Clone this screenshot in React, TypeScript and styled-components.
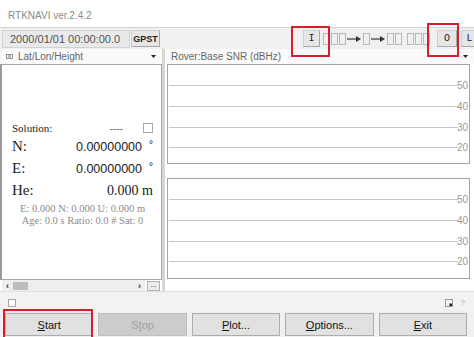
import React from 'react';
import styled, { createGlobalStyle } from 'styled-components';

const GlobalStyle = createGlobalStyle`
  html, body {
    margin: 0;
    padding: 0;
    background: #fff;
  }
  body {
    font-family: "Liberation Sans", Arial, sans-serif;
  }
`;

const Window = styled.div`
  position: relative;
  width: 474px;
  height: 337px;
  overflow: hidden;
  background: #fff;
  display: flex;
  flex-direction: column;
`;

const TitleBar = styled.div`
  height: 27px;
  box-sizing: border-box;
  padding: 3px 0 0 8px;
  display: flex;
  align-items: center;
  font-size: 10px;
  color: #8a8a8a;
`;

const Toolbar = styled.div`
  height: 22px;
  box-sizing: border-box;
  display: flex;
  align-items: center;
  background: #f0f0f0;
  border-top: 1px solid #d4d4d4;
  padding-left: 2px;
`;

const TimeBox = styled.div`
  width: 128px;
  height: 18px;
  box-sizing: border-box;
  display: flex;
  align-items: center;
  padding-left: 7px;
  background: #e9e9e9;
  border: 1px solid #d2d2d2;
  font-size: 11px;
  color: #555;
`;

const SmallButton = styled.div<{ $w: number; $mono?: boolean }>`
  width: ${p => p.$w}px;
  height: 17px;
  box-sizing: border-box;
  display: flex;
  align-items: center;
  justify-content: center;
  margin-left: 1px;
  background: #e6e6e6;
  border: 1px solid #d0d0d0;
  border-right-color: #a8a8a8;
  border-bottom-color: #a8a8a8;
  font-family: ${p => (p.$mono ? '"Liberation Mono", "Courier New", monospace' : '"Liberation Sans", Arial, sans-serif')};
  font-size: ${p => (p.$mono ? 10 : 9)}px;
  font-weight: ${p => (p.$mono ? 'normal' : 'bold')};
  color: #222;
  flex-shrink: 0;
`;

const StreamGroup = styled.div`
  margin-left: auto;
  display: flex;
  align-items: center;
  gap: 3px;
  margin-right: -4px;
`;

const Stream = styled.div`
  width: 110px;
  display: flex;
  align-items: center;
`;

const Tofu = styled.span<{ $gap?: number }>`
  display: inline-block;
  width: 5px;
  height: 10px;
  border: 1px solid #b8b8b8;
  margin-right: 1px;
  margin-left: ${p => p.$gap ?? 0}px;
`;

const Arrow = () => (
  <svg width="15" height="6" viewBox="0 0 15 6">
    <line x1="0" y1="3" x2="10" y2="3" stroke="#333" strokeWidth="1.2" />
    <polygon points="9,0 14,3 9,6" fill="#333" />
  </svg>
);

const Main = styled.div`
  flex: 1;
  display: flex;
  min-height: 0;
`;

const LeftCol = styled.div`
  width: 162px;
  display: flex;
  flex-direction: column;
`;

const Splitter = styled.div`
  width: 3px;
  background: #d6d6d6;
`;

const RightCol = styled.div`
  flex: 1;
  display: flex;
  flex-direction: column;
`;

const PaneHeader = styled.div`
  height: 15px;
  flex-shrink: 0;
  display: flex;
  align-items: center;
  gap: 5px;
  padding: 0 6px 0 6px;
  font-size: 10px;
  color: #666;
  background: #fafafa;
`;

const HeaderIcons = styled.div`
  margin-left: auto;
  display: flex;
  align-items: center;
  gap: 9px;
`;

const DropArrow = () => (
  <svg width="5" height="3" viewBox="0 0 5 3">
    <polygon points="0,0 5,0 2.5,3" fill="#222" />
  </svg>
);

const Dash = () => (
  <svg width="6" height="3" viewBox="0 0 6 3">
    <rect x="0" y="0" width="6" height="2" fill="#444" />
  </svg>
);

const GridIcon = () => (
  <svg width="7" height="5" viewBox="0 0 7 5">
    <rect x="0.5" y="0.5" width="2.5" height="4" fill="none" stroke="#777" strokeWidth="0.8" />
    <rect x="4" y="0.5" width="2.5" height="4" fill="none" stroke="#777" strokeWidth="0.8" />
  </svg>
);

const SolPanel = styled.div`
  flex: 1;
  box-sizing: border-box;
  background: #fff;
  border: 1px solid #a8a8a8;
  border-left: 2px solid #999;
  padding: 55px 8px 0 10px;
  display: flex;
  flex-direction: column;
`;

const Row = styled.div<{ $h: number }>`
  height: ${p => p.$h}px;
  display: flex;
  align-items: center;
  justify-content: space-between;
`;

const SerifLabel = styled.span<{ $size: number }>`
  font-family: "Liberation Serif", "Times New Roman", serif;
  font-size: ${p => p.$size}px;
  color: #222;
`;

const Value = styled.span<{ $serif?: boolean }>`
  font-family: ${p => (p.$serif ? '"Liberation Serif", "Times New Roman", serif' : '"Liberation Sans", Arial, sans-serif')};
  font-size: ${p => (p.$serif ? 14 : 12.5)}px;
  color: #222;
`;

const Degree = styled.span`
  font-size: 10px;
  margin-left: 7px;
  vertical-align: 3px;
`;

const SolState = styled.div`
  display: flex;
  align-items: center;
  gap: 20px;
  font-size: 10px;
  color: #666;
`;

const CheckBox = styled.span<{ $size: number }>`
  display: inline-block;
  width: ${p => p.$size}px;
  height: ${p => p.$size}px;
  box-sizing: border-box;
  border: 1px solid #a6a6a6;
  background: #fff;
`;

const InfoLine = styled.div`
  height: 12px;
  display: flex;
  align-items: center;
  justify-content: center;
  font-family: "Liberation Serif", "Times New Roman", serif;
  font-size: 10.5px;
  color: #8c8c8c;
  white-space: nowrap;
`;

const ScrollRow = styled.div`
  height: 11px;
  flex-shrink: 0;
  display: flex;
  align-items: center;
  background: #fff;
`;

const ScrollTrack = styled.div`
  width: 143px;
  height: 11px;
  margin-left: 2px;
  box-sizing: border-box;
  display: flex;
  align-items: center;
  padding: 0 4px;
  background: #eeeeee;
  font-size: 9px;
  font-weight: bold;
  color: #333;
`;

const Thumb = styled.div`
  width: 15px;
  height: 8px;
  margin-left: 4px;
  background: #bdbdbd;
`;

const MoreButton = styled.div`
  width: 13px;
  height: 10px;
  margin-left: 2px;
  box-sizing: border-box;
  border: 1px solid #b0b0b0;
  background: #ececec;
  font-size: 7px;
  line-height: 6px;
  text-align: center;
  color: #333;
`;

const ChartArea = styled.div`
  flex: 1;
  display: flex;
  flex-direction: column;
  gap: 14px;
  padding: 0 4px 12px 2px;
`;

const ChartBox = styled.div<{ $h: number }>`
  height: ${p => p.$h}px;
  box-sizing: border-box;
  border: 1px solid #a4a4a4;
  background: #fff;
`;

const StatusBar = styled.div`
  height: 20px;
  box-sizing: border-box;
  display: flex;
  align-items: center;
  padding: 2px 9px 0 8px;
  background: #f2f2f2;
  border-top: 1px solid #dedede;
`;

const StatusIcons = styled.div`
  margin-left: auto;
  display: flex;
  align-items: center;
  gap: 8px;
  font-size: 8px;
  color: #aaa;
`;

const ButtonRow = styled.div`
  height: 26px;
  box-sizing: border-box;
  padding: 2px 7px 0 5px;
  display: grid;
  grid-template-columns: repeat(5, 1fr);
  gap: 5px;
  background: #f0f0f0;
`;

const Button = styled.div<{ $disabled?: boolean }>`
  height: 23px;
  box-sizing: border-box;
  display: flex;
  align-items: center;
  justify-content: center;
  font-size: 11px;
  background: ${p => (p.$disabled ? '#cccccc' : '#e1e1e1')};
  border: 1px solid ${p => (p.$disabled ? '#bfbfbf' : '#adadad')};
  color: ${p => (p.$disabled ? '#a0a0a0' : '#111')};
  u {
    text-decoration-thickness: 1px;
    text-underline-offset: 1px;
  }
`;

const Mark = styled.div<{ $x: number; $y: number; $w: number; $h: number }>`
  position: absolute;
  left: ${p => p.$x}px;
  top: ${p => p.$y}px;
  width: ${p => p.$w}px;
  height: ${p => p.$h}px;
  box-sizing: border-box;
  border: 2px solid #d4202c;
  pointer-events: none;
`;

const SnrChart = ({ h }: { h: number }) => {
  const w = 301;
  const rows = [
    { y: 20, label: '50' },
    { y: 41, label: '40' },
    { y: 62, label: '30' },
    { y: 82, label: '20' },
  ];
  return (
    <ChartBox $h={h}>
      <svg width={w} height={h - 2} viewBox={`0 0 ${w} ${h - 2}`} style={{ display: 'block' }}>
        {rows.map(r => (
          <g key={r.label}>
            <line x1="1" y1={r.y + 0.5} x2="290" y2={r.y + 0.5} stroke="#c6c6c6" strokeWidth="1" />
            <text
              x="289"
              y={r.y + 4}
              fontSize="10"
              fill="#9a9a9a"
              fontFamily='"Liberation Sans", Arial, sans-serif'
            >
              {r.label}
            </text>
          </g>
        ))}
      </svg>
    </ChartBox>
  );
};

export default function App() {
  return (
    <>
      <GlobalStyle />
      <Window>
        <TitleBar>RTKNAVI ver.2.4.2</TitleBar>

        <Toolbar>
          <TimeBox>2000/01/01 00:00:00.0</TimeBox>
          <SmallButton $w={29}>GPST</SmallButton>
          <StreamGroup>
            <SmallButton $w={17} $mono>I</SmallButton>
            <Stream>
              <Tofu /><Tofu /><Tofu />
              <Arrow />
              <Tofu $gap={1} />
              <Arrow />
              <Tofu $gap={1} /><Tofu />
              <Tofu $gap={4} /><Tofu /><Tofu />
            </Stream>
            <SmallButton $w={20} $mono>O</SmallButton>
            <SmallButton $w={17} $mono>L</SmallButton>
          </StreamGroup>
        </Toolbar>

        <Main>
          <LeftCol>
            <PaneHeader>
              <GridIcon />
              Lat/Lon/Height
              <HeaderIcons>
                <DropArrow />
              </HeaderIcons>
            </PaneHeader>
            <SolPanel>
              <Row $h={16}>
                <SerifLabel $size={11}>Solution:</SerifLabel>
                <SolState>
                  ----
                  <CheckBox $size={10} />
                </SolState>
              </Row>
              <Row $h={21}>
                <SerifLabel $size={15}>N:</SerifLabel>
                <Value>0.00000000<Degree>°</Degree></Value>
              </Row>
              <Row $h={22}>
                <SerifLabel $size={15}>E:</SerifLabel>
                <Value>0.00000000<Degree>°</Degree></Value>
              </Row>
              <Row $h={23}>
                <SerifLabel $size={15}>He:</SerifLabel>
                <Value $serif>0.000 m</Value>
              </Row>
              <InfoLine>E: 0.000 N: 0.000 U: 0.000 m</InfoLine>
              <InfoLine>Age: 0.0 s Ratio: 0.0 # Sat: 0</InfoLine>
            </SolPanel>
            <ScrollRow>
              <ScrollTrack>
                ‹
                <Thumb />
                <span style={{ marginLeft: 'auto' }}>›</span>
              </ScrollTrack>
              <MoreButton>...</MoreButton>
            </ScrollRow>
          </LeftCol>

          <Splitter />

          <RightCol>
            <PaneHeader>
              Rover:Base SNR (dBHz)
              <HeaderIcons>
                <Dash />
                <DropArrow />
              </HeaderIcons>
            </PaneHeader>
            <ChartArea>
              <SnrChart h={100} />
              <SnrChart h={101} />
            </ChartArea>
          </RightCol>
        </Main>

        <StatusBar>
          <CheckBox $size={8} />
          <StatusIcons>
            <svg width="8" height="8" viewBox="0 0 8 8">
              <rect x="0.5" y="0.5" width="7" height="7" fill="none" stroke="#999" strokeWidth="1" />
              <rect x="4.5" y="4.5" width="2.5" height="2.5" fill="#222" />
            </svg>
            ?
          </StatusIcons>
        </StatusBar>

        <ButtonRow>
          <Button><span><u>S</u>tart</span></Button>
          <Button $disabled><span>S<u>t</u>op</span></Button>
          <Button><span><u>P</u>lot...</span></Button>
          <Button><span><u>O</u>ptions...</span></Button>
          <Button><span><u>E</u>xit</span></Button>
        </ButtonRow>

        <Mark $x={291} $y={26} $w={39} $h={31} />
        <Mark $x={427} $y={23} $w={32} $h={34} />
        <Mark $x={3} $y={309} $w={90} $h={30} />
      </Window>
    </>
  );
}
